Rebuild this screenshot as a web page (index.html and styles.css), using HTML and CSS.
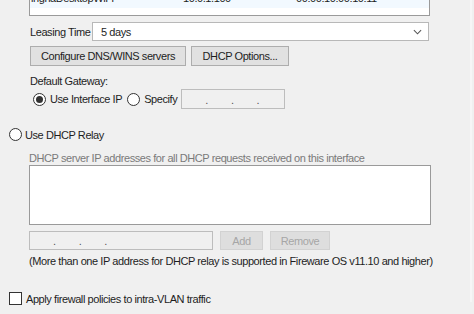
FILE: index.html
```html
<!doctype html>
<html lang="en">
<head>
  <meta charset="UTF-8">
  <title>DHCP Settings</title>
  <link rel="stylesheet" href="styles.css">
</head>
<body>
  <div class="panel">
    <div class="lease-list">
      <div class="lease-row">
        <span class="col-name">ingnaDesktopWiFi</span>
        <span class="col-ip">10.0.1.100</span>
        <span class="col-mac">00:00:10:00:10:11</span>
      </div>
    </div>

    <div class="field-row">
      <span class="label lease-label">Leasing Time</span>
      <div class="select">
        <span>5 days</span>
        <svg class="chevron" viewBox="0 0 10 6"><path d="M1 1l4 4 4-4" fill="none" stroke="#555" stroke-width="1.2"/></svg>
      </div>
    </div>

    <div class="button-row">
      <button class="btn btn-dns">Configure DNS/WINS servers</button>
      <button class="btn btn-options">DHCP Options...</button>
    </div>

    <div class="gateway">
      <div class="label">Default Gateway:</div>
      <div class="radio-row">
        <span class="radio checked"></span>
        <span class="radio-text">Use Interface IP</span>
        <span class="radio"></span>
        <span class="radio-text">Specify</span>
        <div class="ip-field ip-gateway"><i>.</i><i>.</i><i>.</i></div>
      </div>
    </div>

    <div class="relay">
      <span class="radio"></span>
      <span class="radio-text">Use DHCP Relay</span>
    </div>

    <div class="relay-body">
      <div class="hint">DHCP server IP addresses for all DHCP requests received on this interface</div>
      <div class="textarea"></div>
      <div class="ip-row">
        <div class="ip-field ip-relay"><i>.</i><i>.</i><i>.</i></div>
        <button class="btn btn-disabled btn-add">Add</button>
        <button class="btn btn-disabled btn-remove">Remove</button>
      </div>
      <div class="note">(More than one IP address for DHCP relay is supported in Fireware OS v11.10 and higher)</div>
    </div>

    <div class="check-row">
      <span class="checkbox"></span>
      <span class="radio-text">Apply firewall policies to intra-VLAN traffic</span>
    </div>
  </div>
</body>
</html>
```

FILE: styles.css
```css
* {
  box-sizing: border-box;
  margin: 0;
  padding: 0;
}

body {
  background: #f0f0f0;
  font-family: 'Liberation Sans', Arial, sans-serif;
  font-size: 11px;
  letter-spacing: -0.42px;
  color: #1e1e1e;
  overflow: hidden;
  height: 314px;
}

.panel {
  padding-left: 9px;
  width: 472px;
  height: 314px;
  border-right: 2px solid #f6f6f6;
}

.lease-list {
  margin: -12px 0 0 20px;
  width: 401px;
  height: 28px;
  background: #fff;
  border: 1px solid #9a9a9a;
}

.lease-row {
  display: flex;
  height: 19px;
  padding-top: 3px;
  background: #f2f9ff;
}

.col-name { width: 153px; padding-left: 1px; }
.col-ip { width: 113px; }

.field-row {
  display: flex;
  align-items: center;
  margin: 6px 0 0 21px;
}

.lease-label {
  width: 62px;
}

.select {
  display: flex;
  align-items: center;
  justify-content: space-between;
  width: 337px;
  height: 19px;
  padding: 0 6px 0 8px;
  background: #fff;
  border: 1px solid #b8b8b8;
}

.chevron {
  width: 9px;
  height: 6px;
}

.button-row {
  display: flex;
  gap: 5px;
  margin: 5px 0 0 21px;
}

.btn {
  font: inherit;
  letter-spacing: inherit;
  color: #1e1e1e;
  height: 20px;
  background: #e1e1e1;
  border: 1px solid #adadad;
}

.btn-dns { width: 156px; }
.btn-options { width: 98px; }

.gateway {
  margin: 9px 0 0 21px;
}

.radio-row {
  display: flex;
  align-items: center;
  margin-top: 2px;
  margin-left: 3px;
}

.radio {
  width: 13px;
  height: 13px;
  border: 1px solid #333;
  border-radius: 50%;
  background: #fff;
  display: inline-flex;
  align-items: center;
  justify-content: center;
  flex-shrink: 0;
}

.radio.checked::after {
  content: '';
  width: 7px;
  height: 7px;
  border-radius: 50%;
  background: #333;
}

.radio-text {
  margin: 0 5px 0 4px;
}

.ip-field {
  display: flex;
  gap: 23px;
  padding-left: 23px;
  height: 20px;
  border: 1px solid #bdbdbd;
  background: #f0f0f0;
  color: #555;
}

.ip-field i {
  font-style: normal;
  line-height: 20px;
}

.ip-gateway {
  width: 104px;
  margin-left: -1px;
}

.relay {
  display: flex;
  align-items: center;
  margin-top: 19px;
}

.relay .radio-text {
  margin-left: 3px;
}

.relay-body {
  margin-left: 20px;
}

.hint {
  color: #7a7a7a;
  margin-top: 11px;
}

.textarea {
  width: 402px;
  height: 60px;
  margin-top: 1px;
  background: #fff;
  border: 1px solid #9a9a9a;
}

.ip-row {
  display: flex;
  gap: 7px;
  margin-top: 6px;
}

.ip-relay {
  width: 184px;
  height: 19px;
}

.ip-relay i {
  line-height: 19px;
}

.btn-disabled {
  color: #a6a6a6;
  background: #dedede;
  border-color: #d2d2d2;
  height: 19px;
}

.btn-add { width: 43px; }
.btn-remove { width: 60px; }

.note {
  margin-top: 5px;
}

.check-row {
  display: flex;
  align-items: center;
  margin-top: 25px;
}

.checkbox {
  width: 13px;
  height: 13px;
  border: 1px solid #333;
  background: #fff;
}
```
